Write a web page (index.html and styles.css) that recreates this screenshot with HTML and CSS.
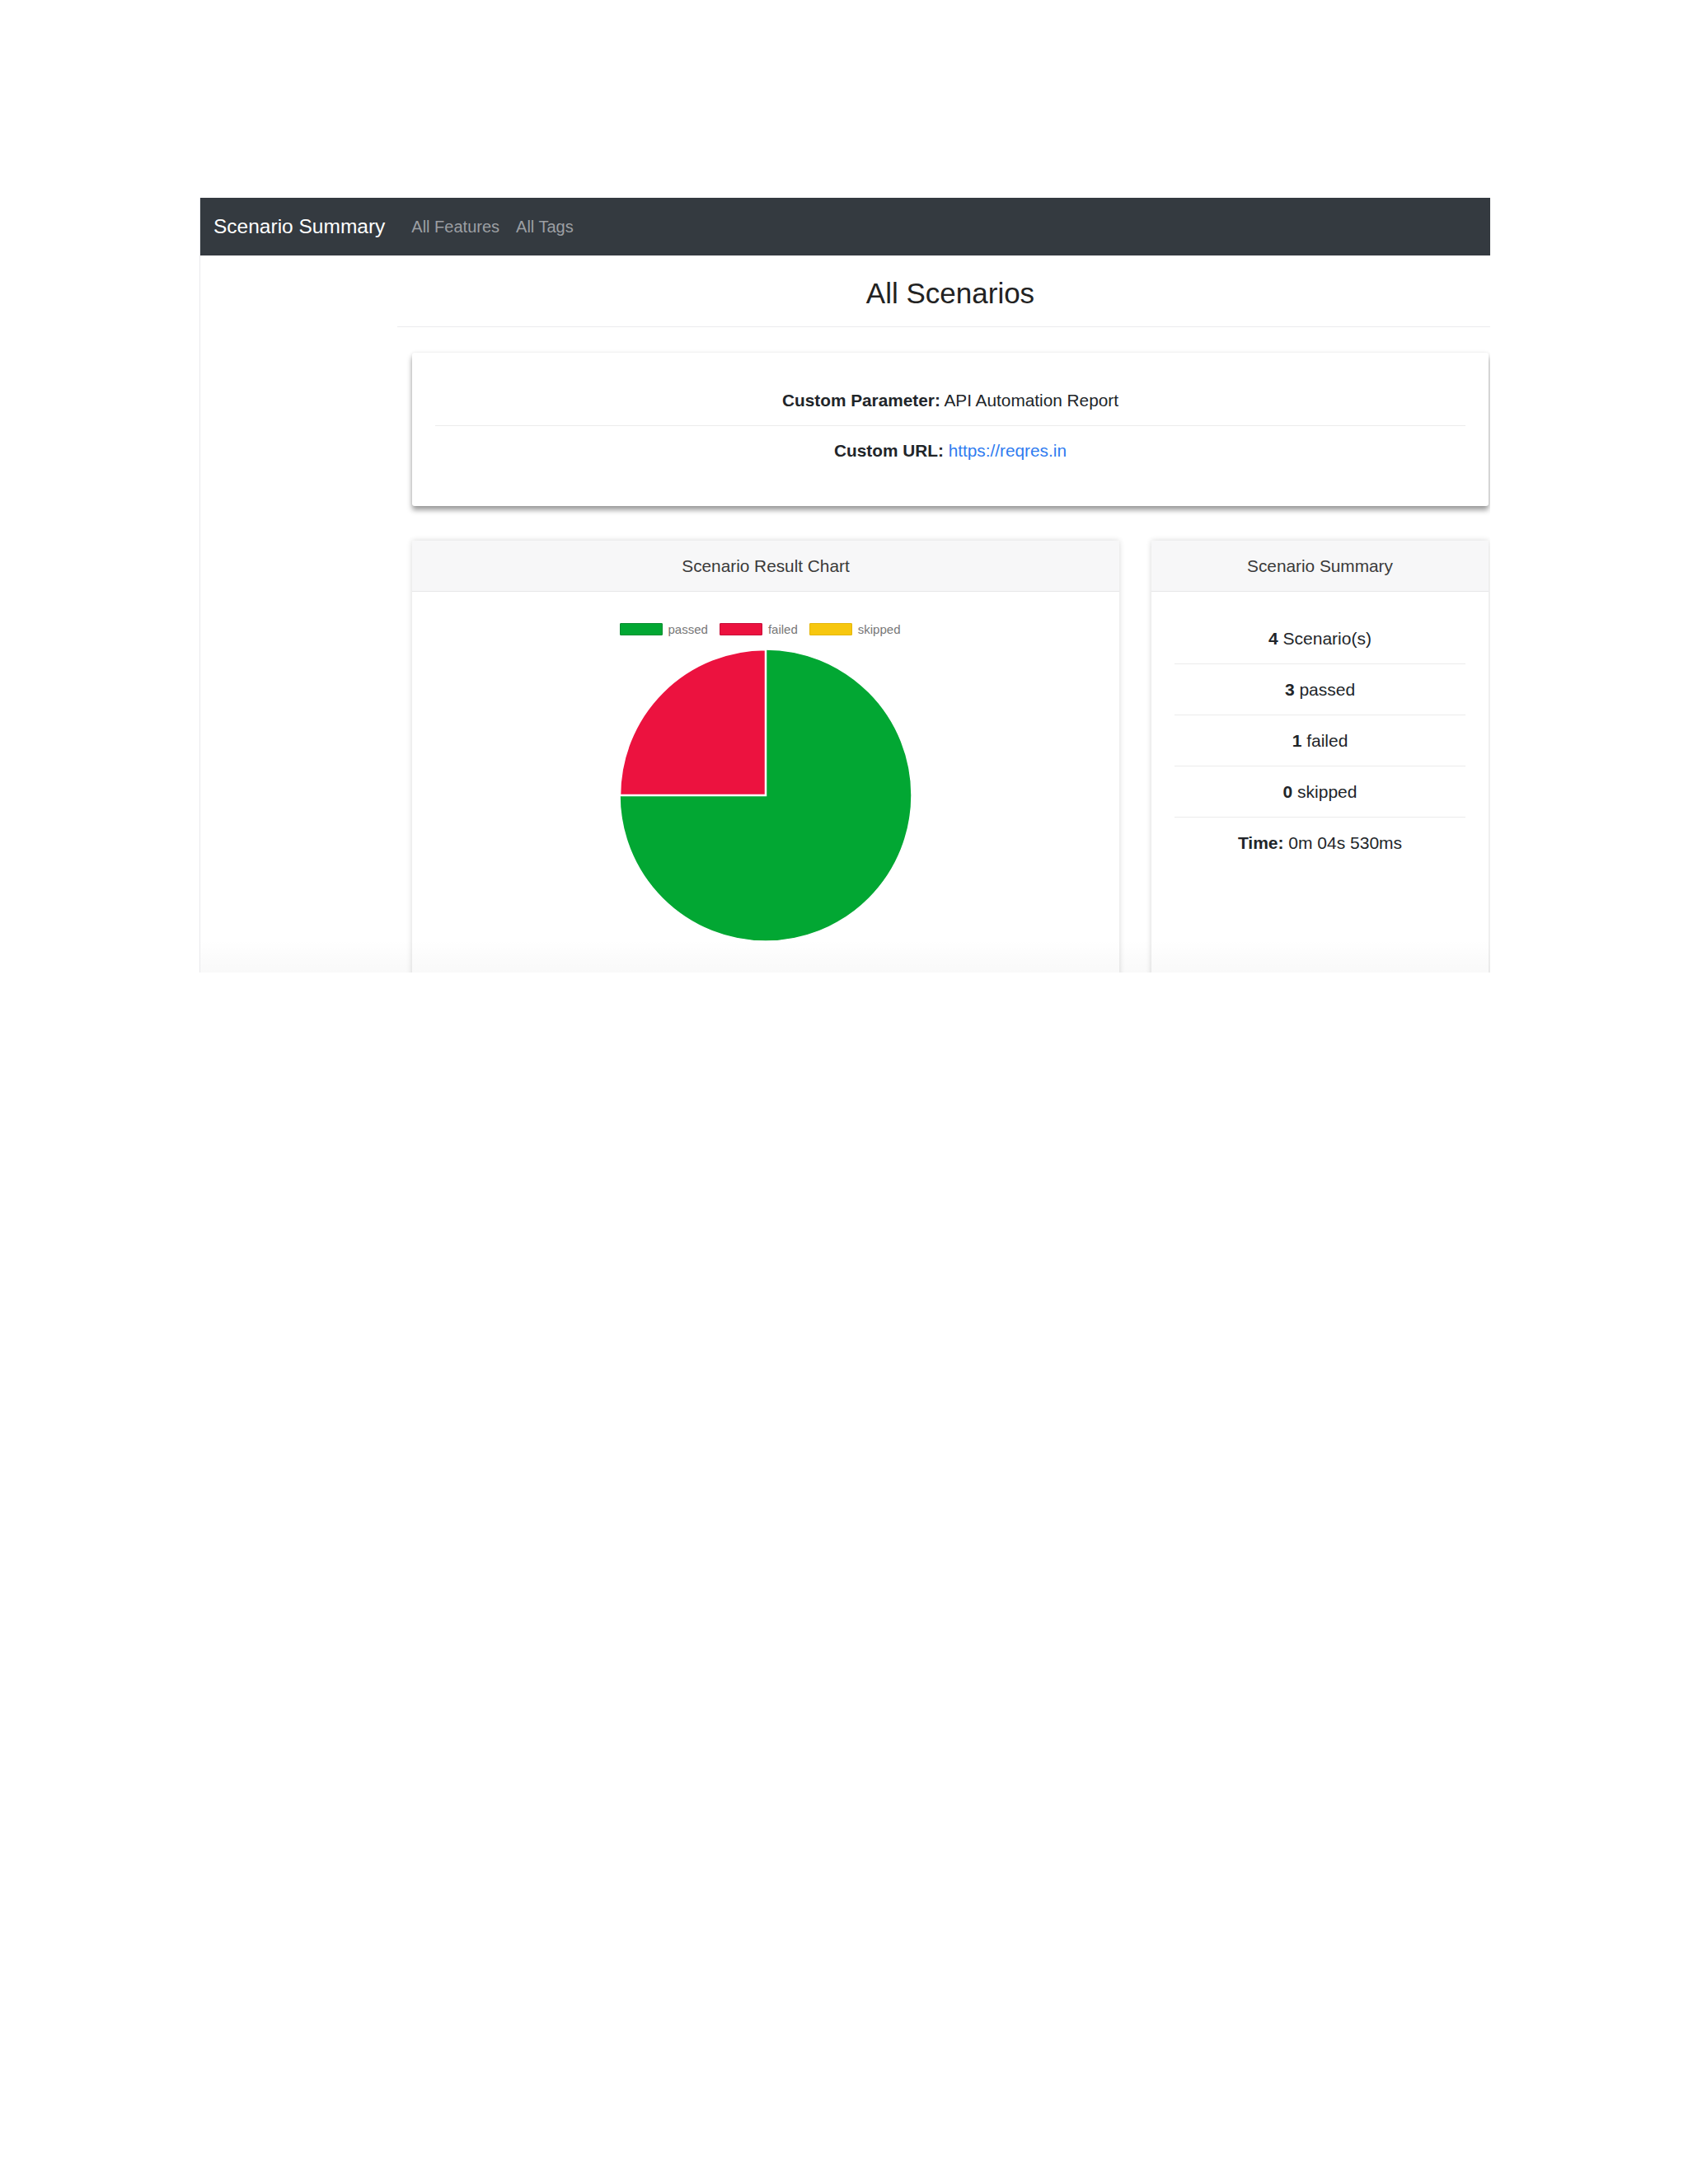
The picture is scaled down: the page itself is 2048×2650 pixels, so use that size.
FILE: index.html
```html
<!DOCTYPE html>
<html lang="en">
<head>
<meta charset="utf-8">
<title>All Scenarios</title>
<link rel="stylesheet" href="styles.css">
</head>
<body>
<div class="page">
  <div class="shot">
    <nav class="navbar">
      <a class="brand" href="#">Scenario Summary</a>
      <a class="nav-link" href="#">All Features</a>
      <a class="nav-link" href="#">All Tags</a>
    </nav>
    <div class="layout">
      <aside class="sidebar"></aside>
      <main class="content">
        <h1 class="title">All Scenarios</h1>
        <div class="card info">
          <div class="info-item"><b>Custom Parameter:</b> API Automation Report</div>
          <div class="info-item"><b>Custom URL:</b> <a class="link" href="#">https://reqres.in</a></div>
        </div>
        <div class="card-row">
          <section class="card chart-card">
            <div class="card-header">Scenario Result Chart</div>
            <div class="chart-body">
              <div class="legend">
                <span class="swatch sw-pass"></span><span class="legend-label">passed</span>
                <span class="swatch sw-fail"></span><span class="legend-label">failed</span>
                <span class="swatch sw-skip"></span><span class="legend-label">skipped</span>
              </div>
              <svg class="pie" width="356" height="356" viewBox="0 0 356 356">
                <circle cx="178" cy="178" r="177" fill="#02a733" stroke="#ffffff" stroke-width="1.5"/>
                <path d="M178 178 L178 1 A177 177 0 0 0 1 178 Z" fill="#ec123f" stroke="#ffffff" stroke-width="2.5" stroke-linejoin="miter"/>
              </svg>
            </div>
          </section>
          <section class="card summary-card">
            <div class="card-header">Scenario Summary</div>
            <div class="summary-body">
              <div class="summary-item"><b>4</b> Scenario(s)</div>
              <div class="summary-item"><b>3</b> passed</div>
              <div class="summary-item"><b>1</b> failed</div>
              <div class="summary-item"><b>0</b> skipped</div>
              <div class="summary-item"><b>Time:</b> 0m 04s 530ms</div>
            </div>
          </section>
        </div>
      </main>
    </div>
    <div class="bottom-fade"></div>
  </div>
</div>
</body>
</html>
```

FILE: styles.css
```css
* { box-sizing: border-box; }

html, body {
  margin: 0;
  padding: 0;
  background: #ffffff;
}

body {
  font-family: "Liberation Sans", Arial, sans-serif;
  color: #212529;
}

.page {
  padding: 240px 0 0 242px;
}

.shot {
  position: relative;
  width: 1566px;
  height: 940px;
  overflow: hidden;
  background: #ffffff;
  border-left: 1px solid #e9e9ec;
}

.navbar {
  display: flex;
  align-items: center;
  height: 70px;
  padding: 0 16px;
  background: #343a40;
}

.brand {
  font-size: 24.5px;
  color: #ffffff;
  text-decoration: none;
  margin-right: 22px;
}

.nav-link {
  font-size: 20px;
  color: #9c9fa3;
  text-decoration: none;
  padding: 0 10px;
}

.layout {
  display: flex;
}

.sidebar {
  width: 239px;
  flex: none;
}

.content {
  flex: 1;
  min-width: 0;
  padding: 0 2px 0 18px;
}

.title {
  margin: 25px -2px 0 -18px;
  padding: 0 0 19px 16px;
  font-size: 35px;
  line-height: 42px;
  font-weight: 400;
  text-align: center;
  color: #222;
  border-bottom: 1px solid #ebebed;
}

.card {
  background: #ffffff;
  border-radius: 3px;
}

.info {
  margin-top: 31px;
  height: 186px;
  padding: 28px 28px 0;
  box-shadow: 0 5px 6px rgba(0, 0, 0, 0.38), 0 0 4px rgba(0, 0, 0, 0.08);
}

.info-item {
  padding: 15px 0;
  font-size: 20.8px;
  line-height: 30px;
  text-align: center;
}

.info-item + .info-item {
  border-top: 1px solid #ececec;
}

.link {
  color: #2f7cf0;
  text-decoration: none;
}

.card-row {
  display: flex;
  gap: 39px;
  margin-top: 42px;
}

.chart-card,
.summary-card {
  min-height: 700px;
  box-shadow: 0 0 7px rgba(0, 0, 0, 0.16);
}

.chart-card {
  width: 858px;
  flex: none;
}

.summary-card {
  flex: 1;
}

.card-header {
  height: 62px;
  display: flex;
  align-items: center;
  justify-content: center;
  background: #f7f7f8;
  border-bottom: 1px solid #e6e6e8;
  font-size: 20.8px;
  color: #3a3a3a;
  border-radius: 3px 3px 0 0;
}

.chart-body {
  display: flex;
  flex-direction: column;
  align-items: center;
  padding-top: 38px;
}

.legend {
  display: flex;
  align-items: center;
  height: 15px;
  margin-left: -14px;
}

.swatch {
  width: 52px;
  height: 15px;
  border-radius: 1px;
  margin-right: 7px;
}

.sw-pass { background: #02a733; border: 1px solid #0b8d32; }
.sw-fail { background: #ec123f; border: 1px solid #c8103a; }
.sw-skip { background: #f7c70f; border: 1px solid #e5b70c; }

.legend-label {
  font-size: 15px;
  color: #777;
  margin-right: 14px;
}

.legend-label:last-child {
  margin-right: 0;
}

.pie {
  display: block;
  margin-top: 16px;
}

.summary-body {
  padding: 26px 28px;
}

.summary-item {
  padding: 15.5px 0;
  font-size: 21px;
  line-height: 30px;
  text-align: center;
  border-bottom: 1px solid #ececec;
}

.summary-item:last-child {
  border-bottom: none;
}

.bottom-fade {
  position: absolute;
  left: 0;
  right: 0;
  bottom: 0;
  height: 40px;
  background: linear-gradient(rgba(0, 0, 0, 0), rgba(0, 0, 0, 0.025));
  pointer-events: none;
}
```
